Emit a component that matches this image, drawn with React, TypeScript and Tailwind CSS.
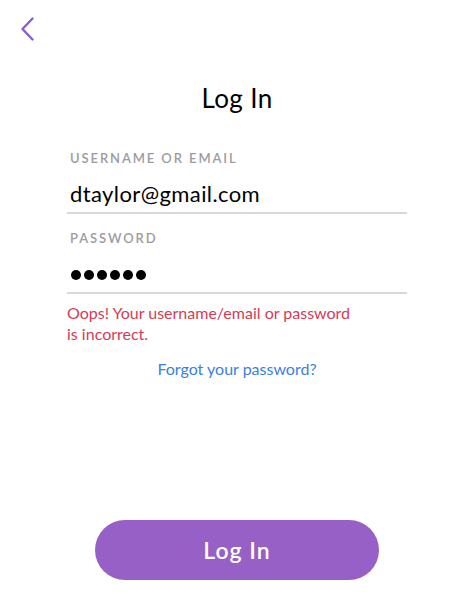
import React from "react"

function BackChevron() {
    return (
        <svg width="14" height="24" viewBox="0 0 14 24" fill="none">
            <path d="M12.5 1.5 L2.5 12 L12.5 22.5" stroke="#8a5bd4" strokeWidth="2.4" strokeLinecap="round" strokeLinejoin="round" />
        </svg>
    )
}

export default function App() {
    const font = { fontFamily: "Lato, 'Noto Sans', sans-serif" }

    return (
        <div className="w-[474px] h-[597px] bg-white flex flex-col" style={font}>
            {/* Back */}
            <div className="pt-[17px] pl-[20px] h-[60px]">
                <button type="button" aria-label="Back" className="block">
                    <BackChevron />
                </button>
            </div>

            {/* Title */}
            <h1 className="mt-[22px] text-center text-[26px] leading-[32px] tracking-[0.4px] text-black">Log In</h1>

            {/* Form */}
            <div className="mt-[36px] px-[67px] flex flex-col">
                <label className="pl-[3px] text-[13px] leading-[16px] font-semibold tracking-[1.9px] text-[#9b9ba0]">
                    USERNAME OR EMAIL
                </label>
                <div className="mt-[15px] pl-[3px] text-[22px] leading-[26px] tracking-[0.4px] text-black">dtaylor@gmail.com</div>
                <div className="mt-[5px] h-[2px] bg-[#d8d8d8]" />

                <label className="mt-[16px] pl-[3px] text-[13px] leading-[16px] font-semibold tracking-[1.9px] text-[#9b9ba0]">
                    PASSWORD
                </label>
                <div className="mt-[16px] pl-[4px] flex gap-[3px] h-[26px] items-center">
                    {[0, 1, 2, 3, 4, 5].map((i) => (
                        <span key={i} className="w-[10px] h-[10px] rounded-full bg-black" />
                    ))}
                </div>
                <div className="mt-[4px] h-[2px] bg-[#d8d8d8]" />

                <p className="mt-[9px] text-[16px] leading-[20.5px] text-[#d83b55]">
                    Oops! Your username/email or password
                    <br />
                    is incorrect.
                </p>

                <a href="#" className="mt-[14px] self-center text-[16px] leading-[21px] text-[#3b7fe4]">
                    Forgot your password?
                </a>
            </div>

            {/* Submit */}
            <div className="mt-auto mb-[17px] flex justify-center">
                <button
                    type="button"
                    className="w-[284px] h-[60px] rounded-full bg-[#9660c6] text-white text-[23px] font-semibold tracking-[1px]"
                >
                    Log In
                </button>
            </div>
        </div>
    )
}
